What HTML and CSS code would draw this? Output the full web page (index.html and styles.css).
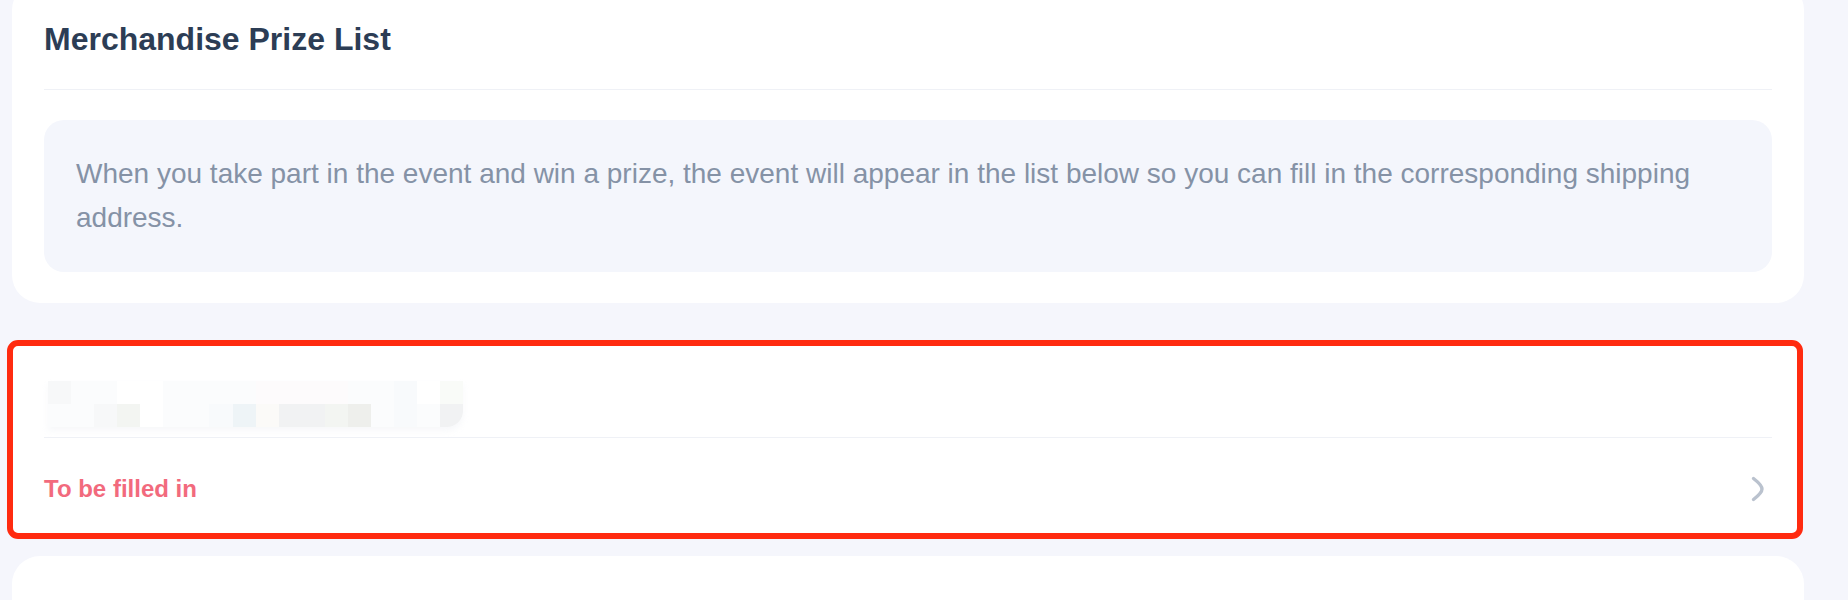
FILE: index.html
```html
<!DOCTYPE html>
<html lang="en">
<head>
<meta charset="utf-8">
<title>Merchandise Prize List</title>
<link rel="stylesheet" href="styles.css">
</head>
<body>
<main class="page">
  <section class="card card-intro">
    <h1 class="card-title">Merchandise Prize List</h1>
    <div class="divider"></div>
    <div class="notice">When you take part in the event and win a prize, the event will appear in the list below so you can fill in the corresponding shipping address.</div>
  </section>

  <section class="card card-prize">
    <div class="redacted" aria-hidden="true">
      <div class="mosaic-row">
        <span class="m m2"></span><span class="m m1"></span><span class="m m1"></span><span class="m m0"></span><span class="m m0"></span><span class="m m1"></span><span class="m m1"></span><span class="m m1"></span><span class="m m1"></span><span class="m m7"></span><span class="m m7"></span><span class="m m7"></span><span class="m m7"></span><span class="m m1"></span><span class="m m1"></span><span class="m m8"></span><span class="m m0"></span><span class="m m9"></span>
      </div>
      <div class="mosaic-row">
        <span class="m m1"></span><span class="m m1"></span><span class="m m2"></span><span class="m m3"></span><span class="m m0"></span><span class="m m1"></span><span class="m m1"></span><span class="m m8"></span><span class="m m5"></span><span class="m m10"></span><span class="m m4"></span><span class="m m4"></span><span class="m m3"></span><span class="m m6"></span><span class="m m1"></span><span class="m m8"></span><span class="m m1"></span><span class="m m4"></span>
      </div>
    </div>
    <div class="divider"></div>
    <div class="status-row">
      <span class="status">To be filled in</span>
      <svg class="chevron" width="14" height="26" viewBox="0 0 14 26" aria-hidden="true">
        <path d="M2.5 2.5 C7 6 11 9.5 11 13 C11 16.5 7 20 2.5 23.5" fill="none" stroke="#bac2ce" stroke-width="3.4" stroke-linecap="round" stroke-linejoin="round"/>
      </svg>
    </div>
  </section>

  <section class="card card-next"></section>
</main>
</body>
</html>
```

FILE: styles.css
```css
html, body {
  margin: 0;
  padding: 0;
  background: #f5f6fc;
  height: 600px;
  overflow: hidden;
}

body {
  font-family: "Liberation Sans", Arial, Helvetica, sans-serif;
}

.page {
  display: flex;
  flex-direction: column;
  width: 1792px;
  margin: -18px 0 0 12px;
}

.card {
  background: #ffffff;
  border-radius: 28px;
}

.card-intro {
  padding: 33px 32px 31px 32px;
}

.card-title {
  margin: 0;
  font-size: 32px;
  line-height: 48px;
  font-weight: 700;
  color: #2c3d55;
}

.divider {
  height: 1px;
  background: #eff1f6;
}

.card-intro .divider {
  margin-top: 26px;
}

.notice {
  margin-top: 30px;
  background: #f4f6fc;
  border-radius: 20px;
  padding: 32px;
  font-size: 28px;
  line-height: 44px;
  color: #8592a6;
}

.card-prize {
  margin: 37px 1px 0 -5px;
  border: 6px solid #ff2b10;
  border-radius: 11px;
  padding: 35px 25px 26px 31px;
}

.redacted {
  width: 415px;
  margin-left: 4px;
  margin-bottom: 10px;
  display: flex;
  flex-direction: column;
  border-radius: 0 0 16px 0;
  overflow: hidden;
  box-shadow: 0 4px 6px rgba(238, 240, 243, 0.45);
}

.mosaic-row {
  display: flex;
  height: 23px;
}

.m {
  flex: 1;
}

.m0 { background: #ffffff; }
.m1 { background: #fbfcfd; }
.m2 { background: #f7f8f9; }
.m3 { background: #f3f5f2; }
.m4 { background: #f1f2f3; }
.m5 { background: #eef4f7; }
.m6 { background: #eeefec; }
.m7 { background: #fdfbfc; }
.m8 { background: #f8fafc; }
.m9 { background: #f9fbf8; }
.m10 { background: #fbfaf8; }

.status-row {
  margin-top: 33px;
  height: 36px;
  display: flex;
  align-items: center;
  justify-content: space-between;
}

.status {
  font-size: 24px;
  line-height: 36px;
  font-weight: 700;
  color: #f26a7d;
}

.chevron {
  display: block;
  margin-right: 7px;
}

.card-next {
  margin-top: 17px;
  height: 120px;
}
```
